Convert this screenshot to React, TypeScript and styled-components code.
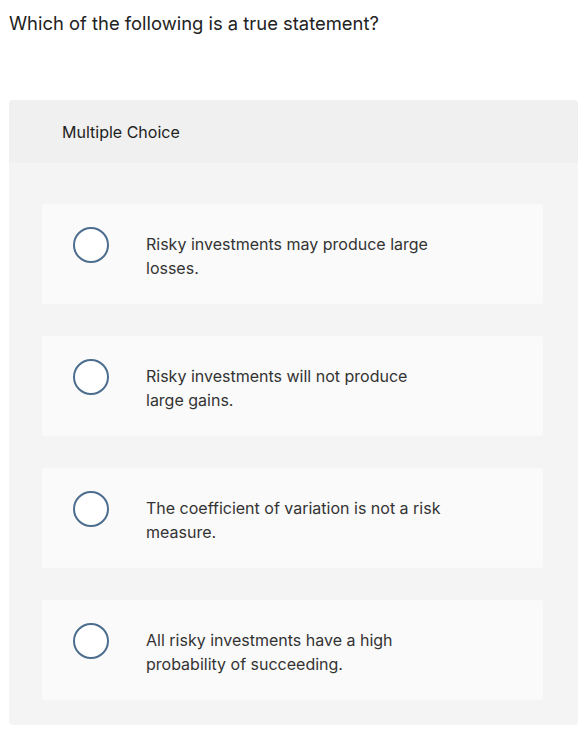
import styled, { createGlobalStyle } from "styled-components";

const GlobalStyle = createGlobalStyle`
  html, body {
    margin: 0;
    padding: 0;
    background: #ffffff;
    font-family: "Inter", "Open Sans", sans-serif;
    color: #333333;
  }
`;

const options = [
  "Risky investments may produce large losses.",
  "Risky investments will not produce large gains.",
  "The coefficient of variation is not a risk measure.",
  "All risky investments have a high probability of succeeding.",
];

function App() {
  return (
    <Page>
      <GlobalStyle />
      <Question>Which of the following is a true statement?</Question>
      <Panel>
        <PanelHeader>Multiple Choice</PanelHeader>
        <OptionList>
          {options.map((text) => (
            <OptionCard key={text}>
              <Radio />
              <OptionText>{text}</OptionText>
            </OptionCard>
          ))}
        </OptionList>
      </Panel>
    </Page>
  );
}

export default App;

const Page = styled.div`
  padding: 10px 10px 4px 9px;
`;

const Question = styled.div`
  font-size: 18.4px;
  line-height: 26px;
  color: #222;
  margin-bottom: 64px;
`;

const Panel = styled.section`
  background: #f4f4f4;
  border-radius: 4px;
  overflow: hidden;
`;

const PanelHeader = styled.div`
  background: #f0f0f0;
  height: 63px;
  display: flex;
  align-items: center;
  padding-left: 53px;
  font-size: 16px;
  color: #222;
`;

const OptionList = styled.div`
  display: flex;
  flex-direction: column;
  gap: 32px;
  padding: 41px 35px 25px 33px;
`;

const OptionCard = styled.div`
  background: #fafafa;
  height: 100px;
  box-sizing: border-box;
  display: flex;
  align-items: flex-start;
  padding: 23px 0 0 31px;
  border-radius: 2px;
`;

const Radio = styled.span`
  width: 32px;
  height: 32px;
  border: 2px solid #4c6d8e;
  border-radius: 50%;
  background: #fff;
  flex-shrink: 0;
`;

const OptionText = styled.div`
  margin-left: 37px;
  margin-top: 5px;
  width: 300px;
  font-size: 16px;
  line-height: 24px;
  color: #333;
`;
